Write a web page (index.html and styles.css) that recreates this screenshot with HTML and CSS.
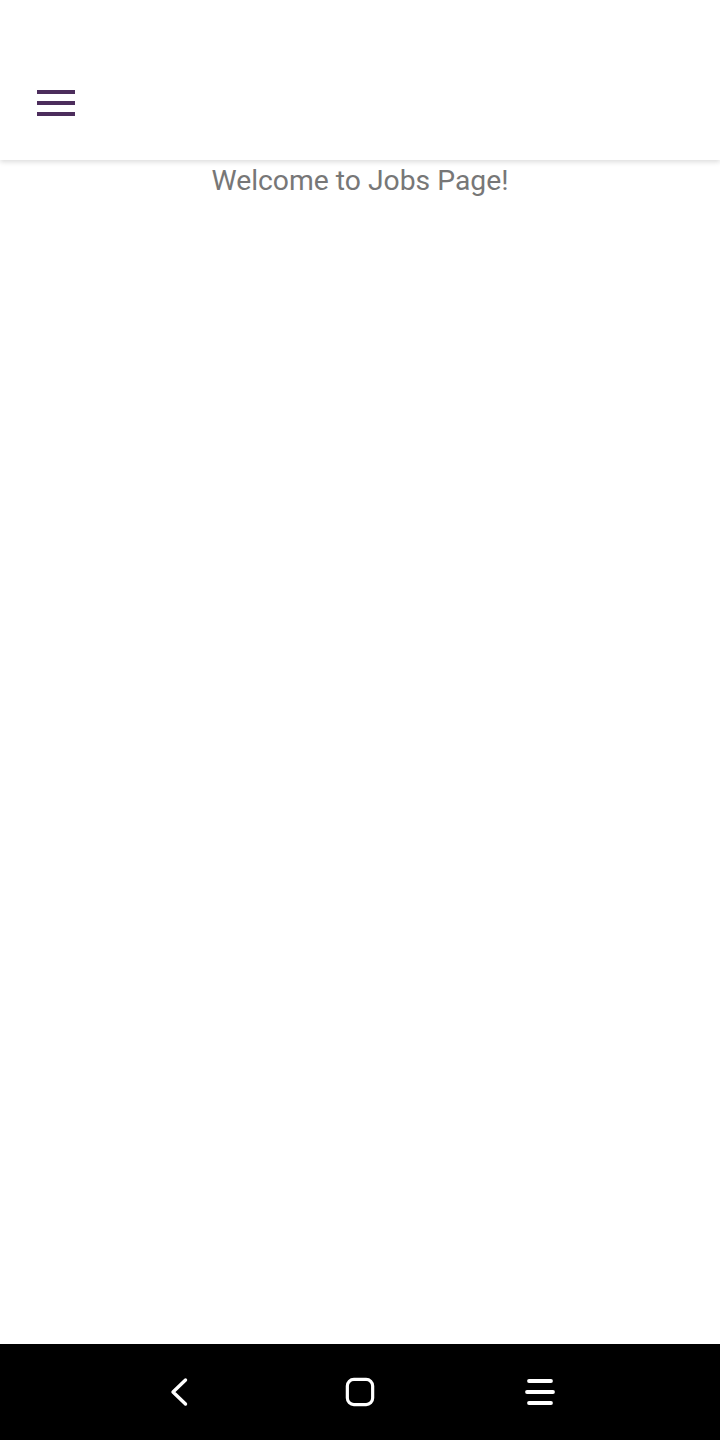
FILE: index.html
```html
<!DOCTYPE html>
<html>
<head>
<meta charset="utf-8">
<link rel="stylesheet" href="styles.css">
</head>
<body>
<div class="screen">
  <header class="appbar">
    <button class="menu-btn" aria-label="Menu">
      <svg width="38" height="26" viewBox="0 0 38 26">
        <rect x="0" y="0" width="38" height="4" fill="#4c2d5c"/>
        <rect x="0" y="11" width="38" height="4" fill="#4c2d5c"/>
        <rect x="0" y="22" width="38" height="4" fill="#4c2d5c"/>
      </svg>
    </button>
  </header>
  <main class="content">
    <p class="welcome">Welcome to Jobs Page!</p>
  </main>
  <nav class="sysnav">
    <div class="navbtn">
      <svg width="30" height="30" viewBox="0 0 30 30">
        <polyline points="20.5,3 8,15 20.5,27" fill="none" stroke="#fff" stroke-width="3.4" stroke-linecap="round" stroke-linejoin="round"/>
      </svg>
    </div>
    <div class="navbtn">
      <svg width="32" height="32" viewBox="0 0 32 32">
        <rect x="2.5" y="2.5" width="27" height="27" rx="7" fill="none" stroke="#fff" stroke-width="3.4"/>
      </svg>
    </div>
    <div class="navbtn">
      <svg width="30" height="30" viewBox="0 0 30 30">
        <line x1="4" y1="4" x2="26" y2="4" stroke="#fff" stroke-width="3.8" stroke-linecap="round"/>
        <line x1="2" y1="15" x2="28" y2="15" stroke="#fff" stroke-width="3.8" stroke-linecap="round"/>
        <line x1="4" y1="26" x2="26" y2="26" stroke="#fff" stroke-width="3.8" stroke-linecap="round"/>
      </svg>
    </div>
  </nav>
</div>
</body>
</html>
```

FILE: styles.css
```css
* { box-sizing: border-box; }
html, body {
  margin: 0;
  padding: 0;
  background: #fff;
  font-family: Roboto, "Noto Sans", sans-serif;
}
.screen {
  width: 720px;
  height: 1440px;
  display: flex;
  flex-direction: column;
  overflow: hidden;
}
.appbar {
  height: 160px;
  flex: none;
  background: #fff;
  display: flex;
  align-items: flex-end;
  padding: 0 0 44px 37px;
  box-shadow: 0 2px 5px rgba(0,0,0,0.14);
  position: relative;
  z-index: 1;
}
.menu-btn {
  border: 0;
  background: transparent;
  padding: 0;
  margin: 0;
  display: block;
  line-height: 0;
}
.content {
  flex: 1;
  background: #fff;
}
.welcome {
  margin: 5px 0 0;
  text-align: center;
  font-size: 28.3px;
  line-height: 32px;
  color: #777777;
}
.sysnav {
  height: 96px;
  flex: none;
  background: #000;
  display: flex;
  justify-content: center;
  align-items: center;
  gap: 150px;
}
.navbtn {
  width: 30px;
  height: 32px;
  display: flex;
  align-items: center;
  justify-content: center;
}
```
